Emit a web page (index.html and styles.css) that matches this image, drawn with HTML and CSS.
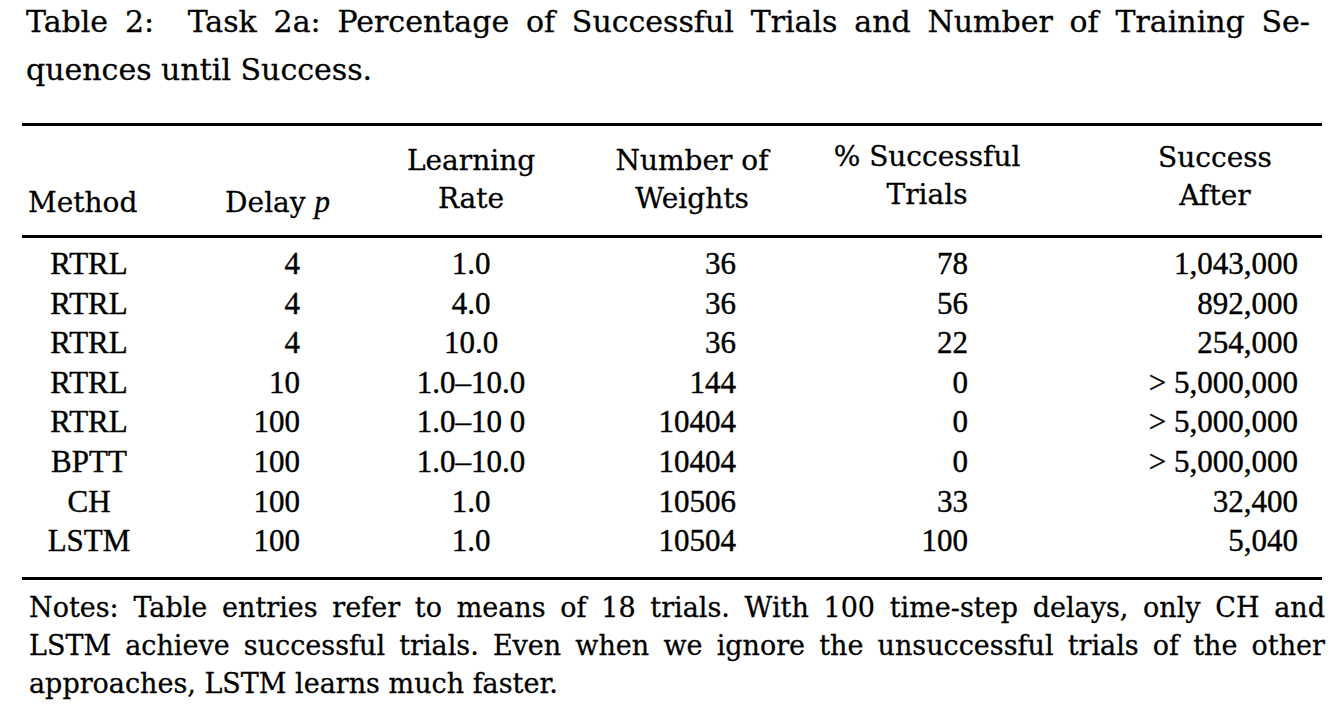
FILE: index.html
```html
<!DOCTYPE html>
<html>
<head>
<meta charset="utf-8">
<link rel="stylesheet" href="styles.css">
</head>
<body>
<div class="page">
  <div class="caption">
    <div class="jline">Table 2:&nbsp; Task 2a: Percentage of Successful Trials and Number of Training Se-</div>
    <div class="line">quences until Success.</div>
  </div>
  <table class="results">
    <colgroup>
      <col class="c1"><col class="c2"><col class="c3"><col class="c4"><col class="c5"><col class="c6">
    </colgroup>
    <thead>
      <tr>
        <th class="h-method">Method</th>
        <th class="h-delay">Delay <i>p</i></th>
        <th class="h-center">Learning<br>Rate</th>
        <th class="h-center">Number of<br>Weights</th>
        <th class="h-center h-pct">% Successful<br>Trials</th>
        <th class="h-center h-after">Success<br>After</th>
      </tr>
    </thead>
    <tbody>
      <tr><td class="d-method">RTRL</td><td class="d-delay">4</td><td class="d-rate">1.0</td><td class="d-w">36</td><td class="d-pct">78</td><td class="d-after">1,043,000</td></tr>
      <tr><td class="d-method">RTRL</td><td class="d-delay">4</td><td class="d-rate">4.0</td><td class="d-w">36</td><td class="d-pct">56</td><td class="d-after">892,000</td></tr>
      <tr><td class="d-method">RTRL</td><td class="d-delay">4</td><td class="d-rate">10.0</td><td class="d-w">36</td><td class="d-pct">22</td><td class="d-after">254,000</td></tr>
      <tr><td class="d-method">RTRL</td><td class="d-delay">10</td><td class="d-rate">1.0–10.0</td><td class="d-w">144</td><td class="d-pct">0</td><td class="d-after">&gt; 5,000,000</td></tr>
      <tr><td class="d-method">RTRL</td><td class="d-delay">100</td><td class="d-rate">1.0–10 0</td><td class="d-w">10404</td><td class="d-pct">0</td><td class="d-after">&gt; 5,000,000</td></tr>
      <tr><td class="d-method">BPTT</td><td class="d-delay">100</td><td class="d-rate">1.0–10.0</td><td class="d-w">10404</td><td class="d-pct">0</td><td class="d-after">&gt; 5,000,000</td></tr>
      <tr><td class="d-method">CH</td><td class="d-delay">100</td><td class="d-rate">1.0</td><td class="d-w">10506</td><td class="d-pct">33</td><td class="d-after">32,400</td></tr>
      <tr><td class="d-method">LSTM</td><td class="d-delay">100</td><td class="d-rate">1.0</td><td class="d-w">10504</td><td class="d-pct">100</td><td class="d-after">5,040</td></tr>
    </tbody>
  </table>
  <div class="notes">
    <div class="jline">Notes: Table entries refer to means of 18 trials. With 100 time-step delays, only CH and</div>
    <div class="jline">LSTM achieve successful trials. Even when we ignore the unsuccessful trials of the other</div>
    <div class="line">approaches, LSTM learns much faster.</div>
  </div>
</div>
</body>
</html>
```
FILE: styles.css
```css
html, body {
  margin: 0;
  padding: 0;
  background: #ffffff;
}
.page {
  width: 1334px;
  height: 713px;
  overflow: hidden;
  font-family: "DejaVu Serif", "Liberation Serif", serif;
  color: #000;
  -webkit-text-stroke: 0.3px #000;
}
.caption {
  padding: 0 24px 0 26px;
  font-size: 30px;
  line-height: 48px;
  margin-top: -2px;
}
.jline {
  text-align: justify;
  text-align-last: justify;
  white-space: nowrap;
}
.caption .jline {
  white-space: normal;
}
.line {
  text-align: left;
}
.results {
  margin: 29px 0 0 22px;
  width: 1300px;
  border-collapse: collapse;
  table-layout: fixed;
}
.c1 { width: 134px; }
.c2 { width: 174px; }
.c3 { width: 282px; }
.c4 { width: 160px; }
.c5 { width: 310px; }
.c6 { width: 240px; }
thead tr {
  border-top: 3px solid #000;
  border-bottom: 3px solid #000;
}
th {
  font-weight: normal;
  font-size: 28px;
  vertical-align: bottom;
  line-height: 38px;
  padding: 12px 0 17px 0;
}
th i {
  font-family: "Liberation Serif", serif;
  font-size: 31px;
}
.h-method { text-align: left; padding-left: 6px; padding-bottom: 13px; }
.h-delay { text-align: right; padding-right: 0; padding-bottom: 13px; }
.h-center { text-align: center; }
.h-pct { padding-bottom: 21px; }
.h-after { padding-left: 26px; padding-bottom: 20px; }
tbody tr {
  height: 39.6px;
}
tbody tr:first-child td { padding-top: 6px; }
tbody tr:last-child td { padding-bottom: 16px; }
tbody tr:last-child { border-bottom: 3px solid #000; }
td {
  padding: 0;
  font-family: "Liberation Serif", "Times New Roman", serif;
  font-size: 31px;
  line-height: 39.6px;
  -webkit-text-stroke: 0.4px #000;
}
.d-method { text-align: center; }
.d-delay { text-align: right; padding-right: 30px; }
.d-rate { text-align: center; }
.d-w { text-align: right; padding-right: 36px; }
.d-pct { text-align: right; padding-right: 114px; }
.d-after { text-align: right; padding-right: 24px; }
.notes {
  margin-top: 9px;
  padding: 0 9px 0 29px;
  font-size: 27px;
  line-height: 38px;
}
```
